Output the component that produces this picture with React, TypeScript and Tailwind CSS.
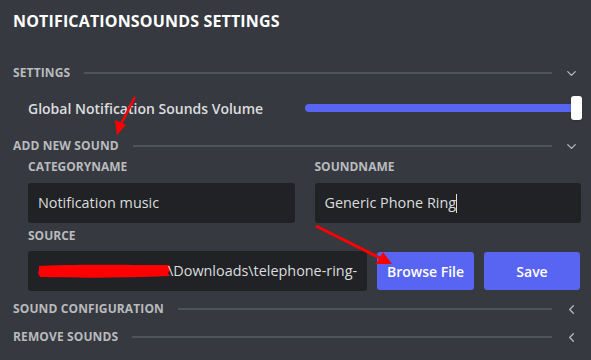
import { ChevronDown, ChevronLeft } from "lucide-react";

function SectionHeader({ title, open }: { title: string; open: boolean }) {
  return (
    <div className="flex items-center h-[20px]">
      <span className="text-[12px] font-bold uppercase text-[#b9bbbe] leading-none tracking-[0.01em]">{title}</span>
      <div className="ml-[14px] flex-1 h-[2px] bg-[#4f545c]" />
      <div className="w-[39px] flex justify-center">
        {open ? (
          <ChevronDown size={15} strokeWidth={2} className="text-[#b9bbbe]" />
        ) : (
          <ChevronLeft size={15} strokeWidth={2} className="text-[#b9bbbe]" />
        )}
      </div>
    </div>
  );
}

function Label({ children }: { children: string }) {
  return <div className="text-[12px] font-bold uppercase text-[#b9bbbe] leading-none h-[12px]">{children}</div>;
}

export default function App() {
  return (
    <div className="relative w-[591px] h-[360px] overflow-hidden bg-[#36393f] font-['Open_Sans',sans-serif] pl-[13px]">
      <h1 className="pt-[11px] text-[16px] font-bold text-white leading-[20px] tracking-[0.01em]">
        NOTIFICATIONSOUNDS SETTINGS
      </h1>

      <div className="mt-[32px]">
        <SectionHeader title="Settings" open />
      </div>

      <div className="flex items-center justify-between pl-[15px] pr-[9px] mt-[12px] h-[26px]">
        <span className="text-[14px] font-semibold text-[#dcddde]">Global Notification Sounds Volume</span>
        <div className="relative w-[277px] h-[26px] flex items-center">
          <div className="w-full h-[8px] rounded-full bg-[#5865f2]" />
          <div className="absolute right-0 top-px w-[11px] h-[24px] rounded-[3px] bg-white shadow" />
        </div>
      </div>

      <div className="mt-[15px]">
        <SectionHeader title="Add New Sound" open />
      </div>

      <div className="pl-[15px] pr-[10px] mt-[5px]">
        <div className="grid grid-cols-2 gap-x-[20px]">
          <div>
            <Label>Categoryname</Label>
            <div className="mt-[10px] h-[40px] rounded-[3px] bg-[#202225] flex items-center px-[10px] text-[14.4px] text-[#dcddde]">
              Notification music
            </div>
          </div>
          <div>
            <Label>Soundname</Label>
            <div className="mt-[10px] h-[40px] rounded-[3px] bg-[#202225] flex items-center px-[10px] text-[14.4px] text-[#dcddde]">
              Generic Phone Ring
              <span className="inline-block w-px h-[19px] bg-[#dcddde]" />
            </div>
          </div>
        </div>

        <div className="mt-[7px]">
          <Label>Source</Label>
        </div>
        <div className="mt-[9px] flex items-center gap-[10px]">
          <div className="w-[339px] h-[40px] rounded-[3px] bg-[#202225] flex items-center pl-[9px] text-[14.4px] text-[#dcddde] overflow-hidden whitespace-nowrap">
            <svg width="134" height="16" viewBox="0 0 134 16" className="shrink-0">
              <path
                d="M2 3 C30 1 90 2 132 2 L133 7 L131 10 L133 13 C90 15 40 15 3 14 L1 10 L2 7 Z"
                fill="#ff0000"
              />
            </svg>
            <span className="-ml-[3px]">\Downloads\telephone-ring-</span>
          </div>
          <button className="w-[97px] h-[38px] rounded-[3px] bg-[#5865f2] text-white text-[14px] font-semibold">
            Browse File
          </button>
          <button className="w-[96px] h-[38px] rounded-[3px] bg-[#5865f2] text-white text-[14px] font-semibold">
            Save
          </button>
        </div>
      </div>

      <div className="mt-[8px]">
        <SectionHeader title="Sound Configuration" open={false} />
      </div>
      <div className="mt-[8px]">
        <SectionHeader title="Remove Sounds" open={false} />
      </div>

      <svg className="absolute inset-0 pointer-events-none" width="591" height="360" viewBox="0 0 591 360">
        <line x1="135" y1="97" x2="121" y2="124" stroke="#ff0000" strokeWidth="2.5" />
        <polygon points="117,135 115,120 126,125" fill="#ff0000" />
        <line x1="316" y1="226" x2="380" y2="258" stroke="#ff0000" strokeWidth="3" />
        <polygon points="392,264 376,264 383,252" fill="#ff0000" />
      </svg>
    </div>
  );
}
